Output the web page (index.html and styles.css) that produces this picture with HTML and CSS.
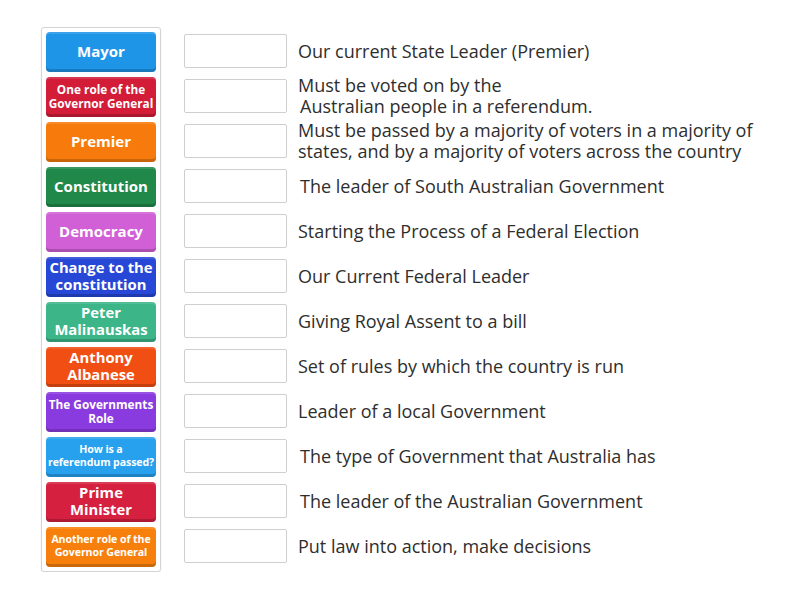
FILE: index.html
```html
<!DOCTYPE html>
<html lang="en">
<head>
<meta charset="utf-8">
<title>Match up</title>
<link rel="stylesheet" href="styles.css">
</head>
<body>
<div class="activity">
  <div class="bank">
    <div class="card c-blue"><span class="t-lg">Mayor</span></div>
    <div class="card c-red"><span class="t-sm">One role of the Governor General</span></div>
    <div class="card c-orange"><span class="t-lg">Premier</span></div>
    <div class="card c-green"><span class="t-lg">Constitution</span></div>
    <div class="card c-pink"><span class="t-lg">Democracy</span></div>
    <div class="card c-royal"><span class="t-md">Change to the constitution</span></div>
    <div class="card c-teal"><span class="t-md">Peter Malinauskas</span></div>
    <div class="card c-flame"><span class="t-md">Anthony Albanese</span></div>
    <div class="card c-purple"><span class="t-sm">The Governments Role</span></div>
    <div class="card c-sky"><span class="t-xs">How is a referendum passed?</span></div>
    <div class="card c-crimson"><span class="t-md t-narrow">Prime Minister</span></div>
    <div class="card c-amber"><span class="t-xs">Another role of the Governor General</span></div>
  </div>
  <div class="targets">
    <div class="row"><div class="slot"></div><div class="desc">Our current State Leader (Premier)</div></div>
    <div class="row"><div class="slot"></div><div class="desc">Must be voted on by the<br><span class="indent">Australian people in a referendum.</span></div></div>
    <div class="row"><div class="slot"></div><div class="desc">Must be passed by a majority of voters in a majority of states, and by a majority of voters across the country</div></div>
    <div class="row"><div class="slot"></div><div class="desc"><span class="indent">The leader of South Australian Government</span></div></div>
    <div class="row"><div class="slot"></div><div class="desc">Starting the Process of a Federal Election</div></div>
    <div class="row"><div class="slot"></div><div class="desc">Our Current Federal Leader</div></div>
    <div class="row"><div class="slot"></div><div class="desc">Giving Royal Assent to a bill</div></div>
    <div class="row"><div class="slot"></div><div class="desc">Set of rules by which the country is run</div></div>
    <div class="row"><div class="slot"></div><div class="desc">Leader of a local Government</div></div>
    <div class="row"><div class="slot"></div><div class="desc"><span class="indent">The type of Government that Australia has</span></div></div>
    <div class="row"><div class="slot"></div><div class="desc"><span class="indent">The leader of the Australian Government</span></div></div>
    <div class="row"><div class="slot"></div><div class="desc">Put law into action, make decisions</div></div>
  </div>
</div>
</body>
</html>
```

FILE: styles.css
```css
html, body {
  margin: 0;
  padding: 0;
  background: #ffffff;
}

body {
  font-family: "Open Sans", "Liberation Sans", sans-serif;
}

.activity {
  display: flex;
  align-items: flex-start;
  padding: 27px 0 0 41px;
  gap: 23px;
}

.bank {
  display: flex;
  flex-direction: column;
  gap: 5px;
  padding: 4px;
  border: 1px solid #d4d4d4;
  border-radius: 3px;
  box-shadow: 0 1px 2px rgba(0, 0, 0, 0.08);
}

.card {
  width: 110px;
  height: 40px;
  box-sizing: border-box;
  border-radius: 4px;
  display: flex;
  align-items: center;
  justify-content: center;
  text-align: center;
  color: #ffffff;
  font-weight: 700;
  box-shadow: inset 0 -3px 0 rgba(0, 0, 0, 0.18), inset 0 2px 0 rgba(255, 255, 255, 0.12);
  padding: 0 1px 2px;
}

.t-lg { font-size: 15px; line-height: 18px; }
.t-md { font-size: 14.8px; line-height: 17px; }
.t-sm { font-size: 11.8px; line-height: 14px; }
.t-xs { font-size: 10.6px; line-height: 13px; letter-spacing: -0.1px; }
.t-narrow { max-width: 70px; }

.c-blue    { background: #1f95e8; }
.c-red     { background: #d21c38; }
.c-orange  { background: #f77b0c; }
.c-green   { background: #20894a; }
.c-pink    { background: #d160d6; }
.c-royal   { background: #2747d6; }
.c-teal    { background: #3cb688; }
.c-flame   { background: #f04e12; }
.c-purple  { background: #8a3be0; }
.c-sky     { background: #27a0ee; }
.c-crimson { background: #d5203f; }
.c-amber   { background: #f7800c; }

.targets {
  display: flex;
  flex-direction: column;
  gap: 5px;
  padding-top: 4px;
}

.row {
  height: 40px;
  display: flex;
  align-items: center;
  gap: 11px;
}

.slot {
  width: 103px;
  height: 34px;
  box-sizing: border-box;
  border: 1px solid #cfcfcf;
  border-radius: 2px;
  background: #ffffff;
  flex: none;
}

.desc {
  font-size: 18px;
  line-height: 21px;
  color: #2e2e2e;
  width: 470px;
}

.indent {
  padding-left: 2px;
}
```
